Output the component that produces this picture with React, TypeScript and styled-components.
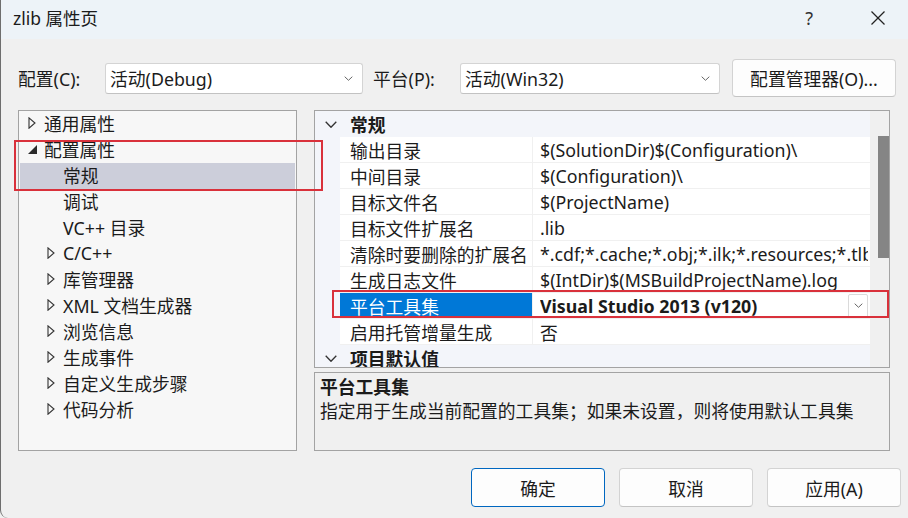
import React from "react";
import styled, { createGlobalStyle } from "styled-components";

const Global = createGlobalStyle`
  html, body { margin: 0; padding: 0; background: #f0f0f0; }
  body { font-family: "Noto Sans", "Noto Sans CJK SC", sans-serif; }
`;

const Window = styled.div`
  position: relative;
  width: 908px;
  height: 518px;
  box-sizing: border-box;
  background: #f0f0f0;
  border-left: 1px solid #6e6e6e;
  border-bottom-left-radius: 8px;
  overflow: hidden;
  display: flex;
  flex-direction: column;
  font-size: 17.8px;
  color: #1b1b1b;
`;

const TitleBar = styled.div`
  height: 39px;
  flex: none;
  background: #edf3f8;
  display: flex;
  align-items: center;
  padding: 0 23px 4px 12px;
  box-sizing: border-box;
`;

const Title = styled.div`
  font-size: 17.5px;
`;

const TitleButtons = styled.div`
  margin-left: auto;
  display: flex;
  align-items: center;
  gap: 58px;
  font-size: 18px;
  color: #333;
`;

const Toolbar = styled.div`
  margin-top: 20px;
  height: 38px;
  padding-left: 17px;
  display: flex;
  align-items: center;
  flex: none;
`;

const Label = styled.div<{ $gap?: number }>`
  width: 87px;
  margin-left: ${(p) => p.$gap ?? 0}px;
  white-space: nowrap;
`;

const Combo = styled.div<{ $w: number }>`
  width: ${(p) => p.$w}px;
  height: 31px;
  box-sizing: border-box;
  background: #fff;
  border: 1px solid #d4d4d4;
  border-bottom-color: #c2c2c2;
  border-radius: 3px;
  display: flex;
  align-items: center;
  padding: 0 9px 0 4px;
  white-space: nowrap;
`;

const ComboText = styled.span`
  flex: 1;
`;

const PushButton = styled.button<{ $w: number; $h: number; $primary?: boolean; $gap?: number }>`
  width: ${(p) => p.$w}px;
  height: ${(p) => p.$h}px;
  margin-left: ${(p) => p.$gap ?? 0}px;
  box-sizing: border-box;
  background: #fdfdfd;
  border: 1px solid ${(p) => (p.$primary ? "#0067c0" : "#d3d3d3")};
  border-bottom-color: ${(p) => (p.$primary ? "#0067c0" : "#c4c4c4")};
  border-radius: 4px;
  font: inherit;
  color: #1b1b1b;
  padding: 0;
  display: flex;
  align-items: center;
  justify-content: center;
  white-space: nowrap;
`;

const Main = styled.div`
  margin-top: 13px;
  padding-left: 17px;
  height: 341px;
  display: flex;
  gap: 17px;
  flex: none;
`;

const Tree = styled.div`
  width: 279px;
  box-sizing: border-box;
  border: 1px solid #a3a3a3;
  background: #f7f7f7;
  padding: 0 1px 1px;
`;

const TreeRow = styled.div<{ $level: number; $selected?: boolean }>`
  height: 26px;
  box-sizing: border-box;
  padding-bottom: 2px;
  display: flex;
  align-items: center;
  padding-left: ${(p) => 4 + p.$level * 19}px;
  background: ${(p) => (p.$selected ? "#ccceda" : "transparent")};
  white-space: nowrap;
`;

const ArrowBox = styled.span`
  width: 16px;
  height: 20px;
  flex: none;
  display: flex;
  align-items: center;
  justify-content: center;
  margin-right: 4px;
`;

const RightCol = styled.div`
  width: 576px;
  display: flex;
  flex-direction: column;
  gap: 4px;
`;

const PropGrid = styled.div`
  height: 258px;
  box-sizing: border-box;
  border: 1px solid #a3a3a3;
  display: flex;
  background: #f0f0f0;
`;

const Rows = styled.div`
  flex: 1;
  overflow: hidden;
`;

const GridRow = styled.div`
  height: 26px;
  display: grid;
  grid-template-columns: 25px 193px 1fr;
`;

const Gutter = styled.div`
  background: #f3f5fa;
  display: flex;
  align-items: center;
  justify-content: center;
  padding-left: 6px;
  box-sizing: border-box;
`;

const CategoryCell = styled.div`
  grid-column: 2 / 4;
  background: #f3f5fa;
  font-weight: 700;
  display: flex;
  align-items: center;
  padding-left: 10px;
`;

const NameCell = styled.div<{ $selected?: boolean }>`
  background: ${(p) => (p.$selected ? "#0078d7" : "#fff")};
  color: ${(p) => (p.$selected ? "#fff" : "inherit")};
  border-bottom: 1px solid #f0f0f0;
  border-right: 1px solid #f0f0f0;
  display: flex;
  align-items: center;
  padding-left: 10px;
  white-space: nowrap;
  overflow: hidden;
`;

const ValueCell = styled.div<{ $bold?: boolean }>`
  background: #fff;
  border-bottom: 1px solid #f0f0f0;
  display: flex;
  align-items: center;
  padding-left: 7px;
  padding-right: 2px;
  white-space: nowrap;
  overflow: hidden;
  font-weight: ${(p) => (p.$bold ? 700 : 400)};
`;

const ValueText = styled.span`
  flex: 1;
  overflow: hidden;
`;

const DropButton = styled.span`
  width: 20px;
  height: 24px;
  box-sizing: border-box;
  border: 1px solid #dadada;
  border-radius: 2px;
  background: #fff;
  display: flex;
  align-items: center;
  justify-content: center;
  flex: none;
`;

const ScrollStrip = styled.div`
  width: 19px;
  flex: none;
  padding: 25px 0 0 8px;
  box-sizing: border-box;
`;

const Thumb = styled.div`
  width: 11px;
  height: 122px;
  background: #858585;
`;

const Desc = styled.div`
  height: 79px;
  box-sizing: border-box;
  border: 1px solid #a3a3a3;
  background: #f0f0f0;
  padding: 2px 5px;
  line-height: 24px;
`;

const DescTitle = styled.div`
  font-weight: 700;
`;

const Footer = styled.div`
  margin-top: 17px;
  display: flex;
  justify-content: flex-end;
  gap: 14px;
  padding-right: 7px;
`;

const RedBox = styled.div<{ $x: number; $y: number; $w: number; $h: number }>`
  position: absolute;
  left: ${(p) => p.$x}px;
  top: ${(p) => p.$y}px;
  width: ${(p) => p.$w}px;
  height: ${(p) => p.$h}px;
  box-sizing: border-box;
  border: 2px solid #d9313b;
  pointer-events: none;
`;

const Chevron = ({ w = 12, h = 7, color = "#333", sw = 1.3 }: { w?: number; h?: number; color?: string; sw?: number }) => (
  <svg width={w} height={h} viewBox={`0 0 ${w} ${h}`}>
    <polyline points={`0.7,0.7 ${w / 2},${h - 0.7} ${w - 0.7},0.7`} fill="none" stroke={color} strokeWidth={sw} />
  </svg>
);

const Collapsed = () => (
  <svg width="8" height="12" viewBox="0 0 8 12">
    <polygon points="1,0.8 7,6 1,11.2" fill="none" stroke="#333" strokeWidth="1.1" />
  </svg>
);

const Expanded = () => (
  <svg width="9" height="9" viewBox="0 0 9 9">
    <polygon points="9,0 9,9 0,9" fill="#2a2a2a" />
  </svg>
);

const CloseIcon = () => (
  <svg width="14" height="14" viewBox="0 0 14 14">
    <line x1="0.5" y1="0.5" x2="13.5" y2="13.5" stroke="#222" strokeWidth="1.2" />
    <line x1="13.5" y1="0.5" x2="0.5" y2="13.5" stroke="#222" strokeWidth="1.2" />
  </svg>
);

type TreeItem = { label: string; level: number; arrow?: "c" | "e"; selected?: boolean };

const treeItems: TreeItem[] = [
  { label: "通用属性", level: 0, arrow: "c" },
  { label: "配置属性", level: 0, arrow: "e" },
  { label: "常规", level: 1, selected: true },
  { label: "调试", level: 1 },
  { label: "VC++ 目录", level: 1 },
  { label: "C/C++", level: 1, arrow: "c" },
  { label: "库管理器", level: 1, arrow: "c" },
  { label: "XML 文档生成器", level: 1, arrow: "c" },
  { label: "浏览信息", level: 1, arrow: "c" },
  { label: "生成事件", level: 1, arrow: "c" },
  { label: "自定义生成步骤", level: 1, arrow: "c" },
  { label: "代码分析", level: 1, arrow: "c" },
];

type Prop =
  | { kind: "cat"; label: string }
  | { kind: "prop"; name: string; value: string; selected?: boolean };

const props: Prop[] = [
  { kind: "cat", label: "常规" },
  { kind: "prop", name: "输出目录", value: "$(SolutionDir)$(Configuration)\\" },
  { kind: "prop", name: "中间目录", value: "$(Configuration)\\" },
  { kind: "prop", name: "目标文件名", value: "$(ProjectName)" },
  { kind: "prop", name: "目标文件扩展名", value: ".lib" },
  { kind: "prop", name: "清除时要删除的扩展名", value: "*.cdf;*.cache;*.obj;*.ilk;*.resources;*.tlb;*.tli;*.tlh" },
  { kind: "prop", name: "生成日志文件", value: "$(IntDir)$(MSBuildProjectName).log" },
  { kind: "prop", name: "平台工具集", value: "Visual Studio 2013 (v120)", selected: true },
  { kind: "prop", name: "启用托管增量生成", value: "否" },
  { kind: "cat", label: "项目默认值" },
];

export default function App() {
  return (
    <>
      <Global />
      <Window>
        <TitleBar>
          <Title>zlib 属性页</Title>
          <TitleButtons>
            <span>?</span>
            <CloseIcon />
          </TitleButtons>
        </TitleBar>

        <Toolbar>
          <Label>配置(C):</Label>
          <Combo $w={258}>
            <ComboText>活动(Debug)</ComboText>
            <Chevron w={9} h={5} color="#666" sw={1} />
          </Combo>
          <Label $gap={10}>平台(P):</Label>
          <Combo $w={260}>
            <ComboText>活动(Win32)</ComboText>
            <Chevron w={9} h={5} color="#666" sw={1} />
          </Combo>
          <PushButton $w={164} $h={38} $gap={12}>
            配置管理器(O)...
          </PushButton>
        </Toolbar>

        <Main>
          <Tree>
            {treeItems.map((t) => (
              <TreeRow key={t.label} $level={t.level} $selected={t.selected}>
                <ArrowBox>{t.arrow === "c" ? <Collapsed /> : t.arrow === "e" ? <Expanded /> : null}</ArrowBox>
                {t.label}
              </TreeRow>
            ))}
          </Tree>

          <RightCol>
            <PropGrid>
              <Rows>
                {props.map((p, i) =>
                  p.kind === "cat" ? (
                    <GridRow key={i}>
                      <Gutter>
                        <Chevron />
                      </Gutter>
                      <CategoryCell>{p.label}</CategoryCell>
                    </GridRow>
                  ) : (
                    <GridRow key={i}>
                      <Gutter />
                      <NameCell $selected={p.selected}>{p.name}</NameCell>
                      <ValueCell $bold={p.selected}>
                        <ValueText>{p.value}</ValueText>
                        {p.selected && (
                          <DropButton>
                            <Chevron w={9} h={5} color="#666" sw={1} />
                          </DropButton>
                        )}
                      </ValueCell>
                    </GridRow>
                  )
                )}
              </Rows>
              <ScrollStrip>
                <Thumb />
              </ScrollStrip>
            </PropGrid>
            <Desc>
              <DescTitle>平台工具集</DescTitle>
              <div>指定用于生成当前配置的工具集；如果未设置，则将使用默认工具集</div>
            </Desc>
          </RightCol>
        </Main>

        <Footer>
          <PushButton $w={134} $h={39} $primary>
            确定
          </PushButton>
          <PushButton $w={134} $h={39}>
            取消
          </PushButton>
          <PushButton $w={134} $h={39}>
            应用(A)
          </PushButton>
        </Footer>

        <RedBox $x={13} $y={140} $w={309} $h={51} />
        <RedBox $x={331} $y={290} $w={557} $h={28} />
      </Window>
    </>
  );
}
